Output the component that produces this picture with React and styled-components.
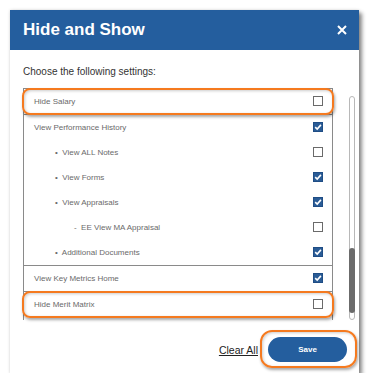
import React from 'react'
import styled, { createGlobalStyle, css } from 'styled-components'

const GlobalStyle = createGlobalStyle`
  html, body {
    margin: 0;
    background: #fff;
    font-family: "Liberation Sans", Arial, sans-serif;
  }
`

const Page = styled.div`
  padding: 10px 0 0 10px;
`

const Dialog = styled.div`
  width: 349px;
  height: 363px;
  background: #fff;
  display: flex;
  flex-direction: column;
  box-shadow: 3px 3px 4px rgba(0, 0, 0, 0.45), 0 0 3px rgba(0, 0, 0, 0.15);
`

const Header = styled.div`
  height: 40px;
  flex: none;
  background: #245e9e;
  display: flex;
  align-items: center;
  justify-content: space-between;
  padding: 0 12px 0 13px;
`

const Title = styled.h2`
  margin: 0;
  color: #fff;
  font-size: 17px;
  font-weight: bold;
  line-height: 20px;
`

const CloseButton = styled.button`
  border: 0;
  padding: 0;
  background: none;
  width: 10px;
  height: 10px;
  display: flex;
  cursor: pointer;
`

const Body = styled.div`
  padding: 16px 0 0 13px;
  display: flex;
  flex-direction: column;
`

const Prompt = styled.p`
  margin: 0 0 10px;
  font-size: 10px;
  line-height: 12px;
  color: #333;
`

const ListArea = styled.div`
  display: flex;
  gap: 16px;
  height: 232px;
`

const List = styled.div`
  width: 308px;
  border: 1px solid #8a8a8a;
  border-bottom: 0;
`

const Section = styled.div`
  border-bottom: ${p => (p.$last ? '0' : '1px solid #8a8a8a')};
`

const highlight = css`
  &::after {
    content: '';
    position: absolute;
    top: -1px;
    bottom: -1px;
    left: -2px;
    right: -2px;
    border: 2.5px solid #f57a1f;
    border-radius: 8px;
    box-shadow: 1px 2px 3px rgba(0, 0, 0, 0.35), inset 1px 1px 3px rgba(0, 0, 0, 0.2);
    pointer-events: none;
  }
`

const Row = styled.label`
  position: relative;
  height: 25px;
  box-sizing: border-box;
  display: flex;
  align-items: center;
  justify-content: space-between;
  padding: 0 9px 1px 10px;
  ${p => p.$highlight && highlight}
`

const Label = styled.span`
  padding-left: ${p => p.$indent}px;
  font-size: 8px;
  color: #6a6a6a;
  white-space: pre;
`

const Box = styled.span`
  width: 10px;
  height: 10px;
  box-sizing: border-box;
  display: flex;
  border: 1px solid ${p => (p.$checked ? '#1f4d85' : '#6a6a6a')};
  background: ${p => (p.$checked ? '#2a5c96' : '#fff')};
`

const Track = styled.div`
  margin-top: 8px;
  width: 6px;
  box-sizing: border-box;
  border: 1px solid #b8b8b8;
  border-radius: 3px;
  display: flex;
  flex-direction: column;
`

const Thumb = styled.div`
  margin-top: 151px;
  height: 65px;
  margin-left: -1px;
  margin-right: -1px;
  border-radius: 3px;
  background: #6b6b6b;
`

const Footer = styled.div`
  display: flex;
  justify-content: flex-end;
  align-items: center;
  gap: 10px;
  padding: 17px 12px 0 0;
`

const ClearAll = styled.button`
  border: 0;
  background: none;
  padding: 0;
  font-family: inherit;
  font-size: 10.5px;
  color: #222;
  text-decoration: underline;
  cursor: pointer;
`

const SaveButton = styled.button`
  position: relative;
  width: 79px;
  height: 25px;
  border: 0;
  border-radius: 13px;
  background: #245e9e;
  color: #fff;
  font-family: inherit;
  font-weight: bold;
  font-size: 8px;
  cursor: pointer;
  &::after {
    content: '';
    position: absolute;
    top: -7px;
    bottom: -6px;
    left: -8px;
    right: -10px;
    border: 2.5px solid #f57a1f;
    border-radius: 12px;
    box-shadow: 1px 2px 3px rgba(0, 0, 0, 0.35), inset 1px 1px 3px rgba(0, 0, 0, 0.2);
  }
`

const Checkbox = ({ checked }) => (
  <Box $checked={checked}>
    {checked && (
      <svg width="8" height="8" viewBox="0 0 8 8">
        <path d="M1.2 4.1 L3.2 6 L6.9 1.9" fill="none" stroke="#fff" strokeWidth="1.6" />
      </svg>
    )}
  </Box>
)

const sections = [
  [{ label: 'Hide Salary', checked: false, highlight: true }],
  [
    { label: 'View Performance History', checked: true },
    { label: '•  View ALL Notes', checked: false, indent: 21 },
    { label: '•  View Forms', checked: true, indent: 21 },
    { label: '•  View Appraisals', checked: true, indent: 21 },
    { label: '-  EE View MA Appraisal', checked: false, indent: 40 },
    { label: '•  Additional Documents', checked: true, indent: 21 },
  ],
  [{ label: 'View Key Metrics Home', checked: true }],
  [{ label: 'Hide Merit Matrix', checked: false, highlight: true }],
]

export default function App() {
  return (
    <Page>
      <GlobalStyle />
      <Dialog>
        <Header>
          <Title>Hide and Show</Title>
          <CloseButton aria-label="Close">
            <svg width="10" height="10" viewBox="0 0 10 10">
              <path d="M1 1 L9 9 M9 1 L1 9" stroke="#fff" strokeWidth="2" />
            </svg>
          </CloseButton>
        </Header>
        <Body>
          <Prompt>Choose the following settings:</Prompt>
          <ListArea>
            <List>
              {sections.map((rows, i) => (
                <Section key={i} $last={i === sections.length - 1}>
                  {rows.map(r => (
                    <Row key={r.label} $highlight={r.highlight}>
                      <Label $indent={r.indent || 0}>{r.label}</Label>
                      <Checkbox checked={r.checked} />
                    </Row>
                  ))}
                </Section>
              ))}
            </List>
            <Track>
              <Thumb />
            </Track>
          </ListArea>
        </Body>
        <Footer>
          <ClearAll>Clear All</ClearAll>
          <SaveButton>Save</SaveButton>
        </Footer>
      </Dialog>
    </Page>
  )
}
